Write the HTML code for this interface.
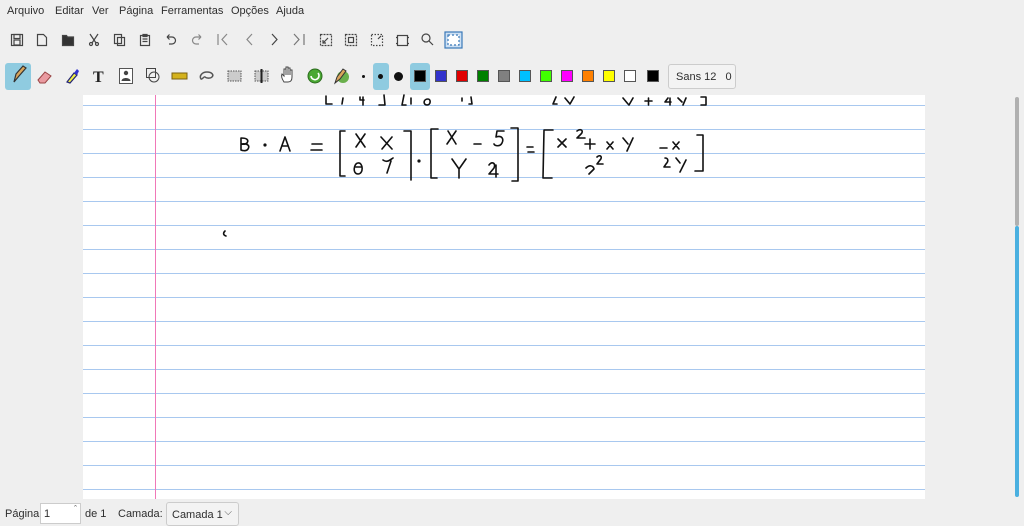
<!DOCTYPE html>
<html><head><meta charset="utf-8"><style>
*{margin:0;padding:0;box-sizing:border-box}
body{width:1024px;height:526px;background:#efefef;font-family:"Liberation Sans","DejaVu Sans",sans-serif;font-size:11px;color:#2e2e2e;position:relative;overflow:hidden}
.a{position:absolute}
.menu span{position:absolute;top:5px;font-size:11px}
.sel{position:absolute;background:#8fcbe0;border-radius:3px}
.sw{position:absolute;width:12px;height:12px;top:70px;border:1px solid #555}
</style></head><body>
<div class="menu">
<span style="left:7px">Arquivo</span><span style="left:55px">Editar</span><span style="left:92px">Ver</span><span style="left:119px">Página</span><span style="left:161px">Ferramentas</span><span style="left:231px">Opções</span><span style="left:276px">Ajuda</span>
</div>
<svg class="a" style="left:0;top:28px" width="470" height="24" fill="none" stroke="#444" stroke-width="1.2">
<rect x="11.5" y="6.5" width="11" height="11"/><rect x="14" y="6.5" width="6" height="4"/><rect x="14" y="12" width="6" height="5"/>
<path d="M37.5 6.5h6l3 3v8h-9z"/>
<path d="M62.5 7.5h4l1 1.5h6v8.5h-11z" fill="#333"/>
<path d="M90 6l6 9M98 6l-6 9"/><circle cx="91" cy="16" r="1.5"/><circle cx="97" cy="16" r="1.5"/>
<rect x="114.5" y="6.5" width="7" height="9"/><rect x="117.5" y="9.5" width="7" height="8"/>
<rect x="140.5" y="7.5" width="9" height="10"/><path d="M143 6.5h4v2h-4zM142.5 11h5M142.5 13.5h5"/>
<path d="M167 9h5a3 3 0 010 7h-3M167 9l2.5-2.5M167 9l2.5 2.5"/>
<path d="M201 9h-5a3 3 0 000 7h3M201 9l-2.5-2.5M201 9l-2.5 2.5" stroke="#888"/>
<path d="M218 6v11M227 6l-5 5.5 5 5.5" stroke="#888"/>
<path d="M252 6l-5 5.5 5 5.5" stroke="#888"/>
<path d="M272 6l5 5.5-5 5.5"/>
<path d="M294 6l5 5.5-5 5.5M304 6v11" stroke="#777"/>
<rect x="320.5" y="6.5" width="11" height="11" stroke-dasharray="2 1"/><path d="M323 15l5-5M323 12v3h3"/>
<rect x="345.5" y="6.5" width="11" height="11" stroke-dasharray="2 1"/><rect x="348.5" y="9.5" width="5" height="5"/>
<rect x="371.5" y="6.5" width="11" height="11" stroke-dasharray="1.5 1.5"/><path d="M378 11l3-3"/>
<rect x="397.5" y="7.5" width="10" height="10"/><path d="M396 9.5h2M396 15.5h2M407 9.5h2M407 15.5h2"/>
<circle cx="426" cy="10" r="4"/><path d="M429 13l4 4"/>
<rect x="445" y="4" width="17" height="16" fill="#cde0f3" stroke="#3a78b8"/><rect x="448" y="7" width="11" height="10" fill="#fff" stroke="#3a78b8" stroke-dasharray="2 2"/>
</svg>
<div class="sel" style="left:5px;top:63px;width:26px;height:27px"></div>
<div class="sel" style="left:373px;top:63px;width:16px;height:27px"></div>
<div class="sel" style="left:410px;top:63px;width:20px;height:27px"></div>
<svg class="a" style="left:0;top:62px" width="360" height="28">
<path d="M14 20l2-8 7-8 3 2-7 8z" fill="#d9a55b" stroke="#333" stroke-width="1.2"/>
<path d="M38 18l7-8 6 4-6 7h-5z" fill="#e99aa0" stroke="#944" stroke-width="1"/>
<path d="M67 20l7-9 3 2-7 8z" fill="#ee4" stroke="#227" stroke-width="1.2"/><path d="M74 11l3-4 2 2-2 4z" fill="#33c"/>
<text x="93" y="20" font-family="Liberation Serif" font-weight="bold" font-size="16" fill="#222">T</text>
<rect x="119.5" y="6.5" width="13" height="15" fill="#fff" stroke="#555"/><circle cx="126" cy="11" r="2.2" fill="#444"/><path d="M121.5 19c0-4 9-4 9 0z" fill="#444"/>
<rect x="146.5" y="6.5" width="9" height="9" fill="none" stroke="#444"/><circle cx="154" cy="15" r="5" fill="none" stroke="#444"/>
<rect x="172" y="11" width="15" height="6" fill="#d4b21c" stroke="#7a6010"/>
<path d="M201 17c-2-3 1-7 6-7s7 3 5 5-6 1-7 0-3 3-4 2z" fill="none" stroke="#555" stroke-width="1.5"/>
<rect x="228" y="9" width="13" height="10" fill="#ccc" stroke="#555" stroke-dasharray="1.5 1"/>
<rect x="255" y="9" width="13" height="10" fill="#ccc" stroke="#555" stroke-dasharray="1.5 1"/><path d="M261.5 7v14" stroke="#222" stroke-width="2"/>
<path d="M284 20c-2-3-3-6-2-8l2 2v-7h2v6-8h2v8-7h2v7-5h2v7c0 4-2 5-4 5z" fill="#fff" stroke="#444"/>
<circle cx="315" cy="14" r="7" fill="#4aa833" stroke="#2b6b1d"/><path d="M311 14a4 4 0 107-3" fill="none" stroke="#fff" stroke-width="1.6"/>
<circle cx="343" cy="15" r="6" fill="#6ab04c"/><path d="M335 21l2-6 6-8 3 2-6 8z" fill="#d9a55b" stroke="#333"/>
</svg>
<div class="a" style="left:362px;top:75px;width:3px;height:3px;border-radius:50%;background:#111"></div>
<div class="a" style="left:378px;top:74px;width:5px;height:5px;border-radius:50%;background:#111"></div>
<div class="a" style="left:394px;top:72px;width:9px;height:9px;border-radius:50%;background:#111"></div>
<div class="sw" style="left:414px;background:#000"></div>
<div class="sw" style="left:435px;background:#3333cc"></div>
<div class="sw" style="left:456px;background:#e00000"></div>
<div class="sw" style="left:477px;background:#008000"></div>
<div class="sw" style="left:498px;background:#808080"></div>
<div class="sw" style="left:519px;background:#00c0ff"></div>
<div class="sw" style="left:540px;background:#40ff00"></div>
<div class="sw" style="left:561px;background:#ff00ff"></div>
<div class="sw" style="left:582px;background:#ff8000"></div>
<div class="sw" style="left:603px;background:#ffff00"></div>
<div class="sw" style="left:624px;background:#fff"></div>
<div class="sw" style="left:647px;background:#000"></div>
<div class="a" style="left:668px;top:64px;width:68px;height:25px;border:1px solid #ccc;border-radius:3px;background:#f3f3f3;font-size:11px;padding:6px 0 0 7px">Sans 12&nbsp;&nbsp;&nbsp;0</div>

<div class="a" style="left:83px;top:95px;width:842px;height:404px;background:#fff"></div>
<div class="a" style="left:83px;top:95px;width:842px;height:404px;background:repeating-linear-gradient(to bottom,transparent 0,transparent 10px,#a8c8ef 10px,#a8c8ef 11px,transparent 11px,transparent 24px)"></div>
<div class="a" style="left:155px;top:95px;width:1px;height:404px;background:#f078b8"></div>
<svg class="a" style="left:0;top:0" width="1024" height="526">
<g fill="none" stroke="#111" stroke-width="1.6" stroke-linecap="round" stroke-linejoin="round">
<path d="M326 96v8h6M343 98l-1 6M360 97v3h4M363 97v8M384 95l1 10h-6M404 95l-2 10h4M411 98v6M428 99c3 0 3 6-1 6s-4-6 1-6M462 98v3M471 97l1 7h-3M556 97l-3 7h4M565 98l5 6M574 97l-4 7M623 98l5 6M633 98l-4 7M645 101h7M648.5 98v7M668 98l-3 4h6M670 98v7M678 98l4 4M686 98l-3 7M701 97h5v8h-5"/>
<path d="M241 150v-12c6 0 8 2 6 5-2 2-6 1-6 1 7-1 9 2 7 5-2 3-7 1-7 1"/><circle cx="265" cy="145" r="0.8"/>
<path d="M280 151l5-14 5 14M282 146h6M312 144h10M311 150h11"/>
<path d="M345 131h-5v45h5M356 134l9 13M365 134l-9 13M381 137l11 12M392 137l-10 12M358 163c5-1 6 11 0 11-6 0-4-11 0-11M356 167h6M383 160c4 3 7 0 10-2M387 173l4-12M404 131h7v49"/>
<circle cx="419" cy="161" r="0.8"/>
<path d="M438 129h-7v49h6M448 131l8 13M456 131l-9 13M474 144h7M504 131h-7l-1 6c6-2 8 2 6 6-2 4-7 3-8 1M452 159l7 10 7-10M459 169v9M489 165c3-4 7-2 5 3l-5 6h9M496 165v12M511 128h7v53h-6"/>
<path d="M527 147h6M528 152h6M553 130h-9l-1 48h9M558 139l8 8M566 139l-8 8M577 131c4-3 7 0 4 3l-4 4h8M585 144h10M590 139v10M607 142l6 7M613 142l-6 7M623 138l5 6M633 138l-6 13M586 168c3-3 7-3 8 1l-5 5M597 157c3-3 6 0 3 3l-3 4h6M660 148h7M673 142l6 7M679 142l-6 7M665 158c3 0 4 3 1 6l-2 3h6M676 158l4 5M686 160l-6 12M697 135h6v36h-8"/>
<path d="M225 231c-2 2-2 4 1 5"/>
</g>
</svg>
<div class="a" style="left:1015px;top:97px;width:4px;height:129px;background:#b0b0b0;border-radius:2px"></div>
<div class="a" style="left:1015px;top:226px;width:4px;height:271px;background:#4ab0e0;border-radius:2px"></div>
<div class="a" style="left:5px;top:508px">Página</div>
<div class="a" style="left:40px;top:503px;width:41px;height:21px;border:1px solid #ccc;background:#fff;padding:4px 0 0 3px">1<span style="position:absolute;right:3px;top:0;font-size:9px;color:#555">ˆ</span></div>
<div class="a" style="left:85px;top:508px">de 1</div>
<div class="a" style="left:118px;top:508px">Camada:</div>
<div class="a" style="left:166px;top:502px;width:73px;height:24px;border:1px solid #ccc;border-radius:3px;background:#f3f3f3;padding:6px 0 0 5px">Camada 1 <span style="position:absolute;right:6px;top:4px;font-size:10px;color:#555">⌵</span></div>
</body></html>
